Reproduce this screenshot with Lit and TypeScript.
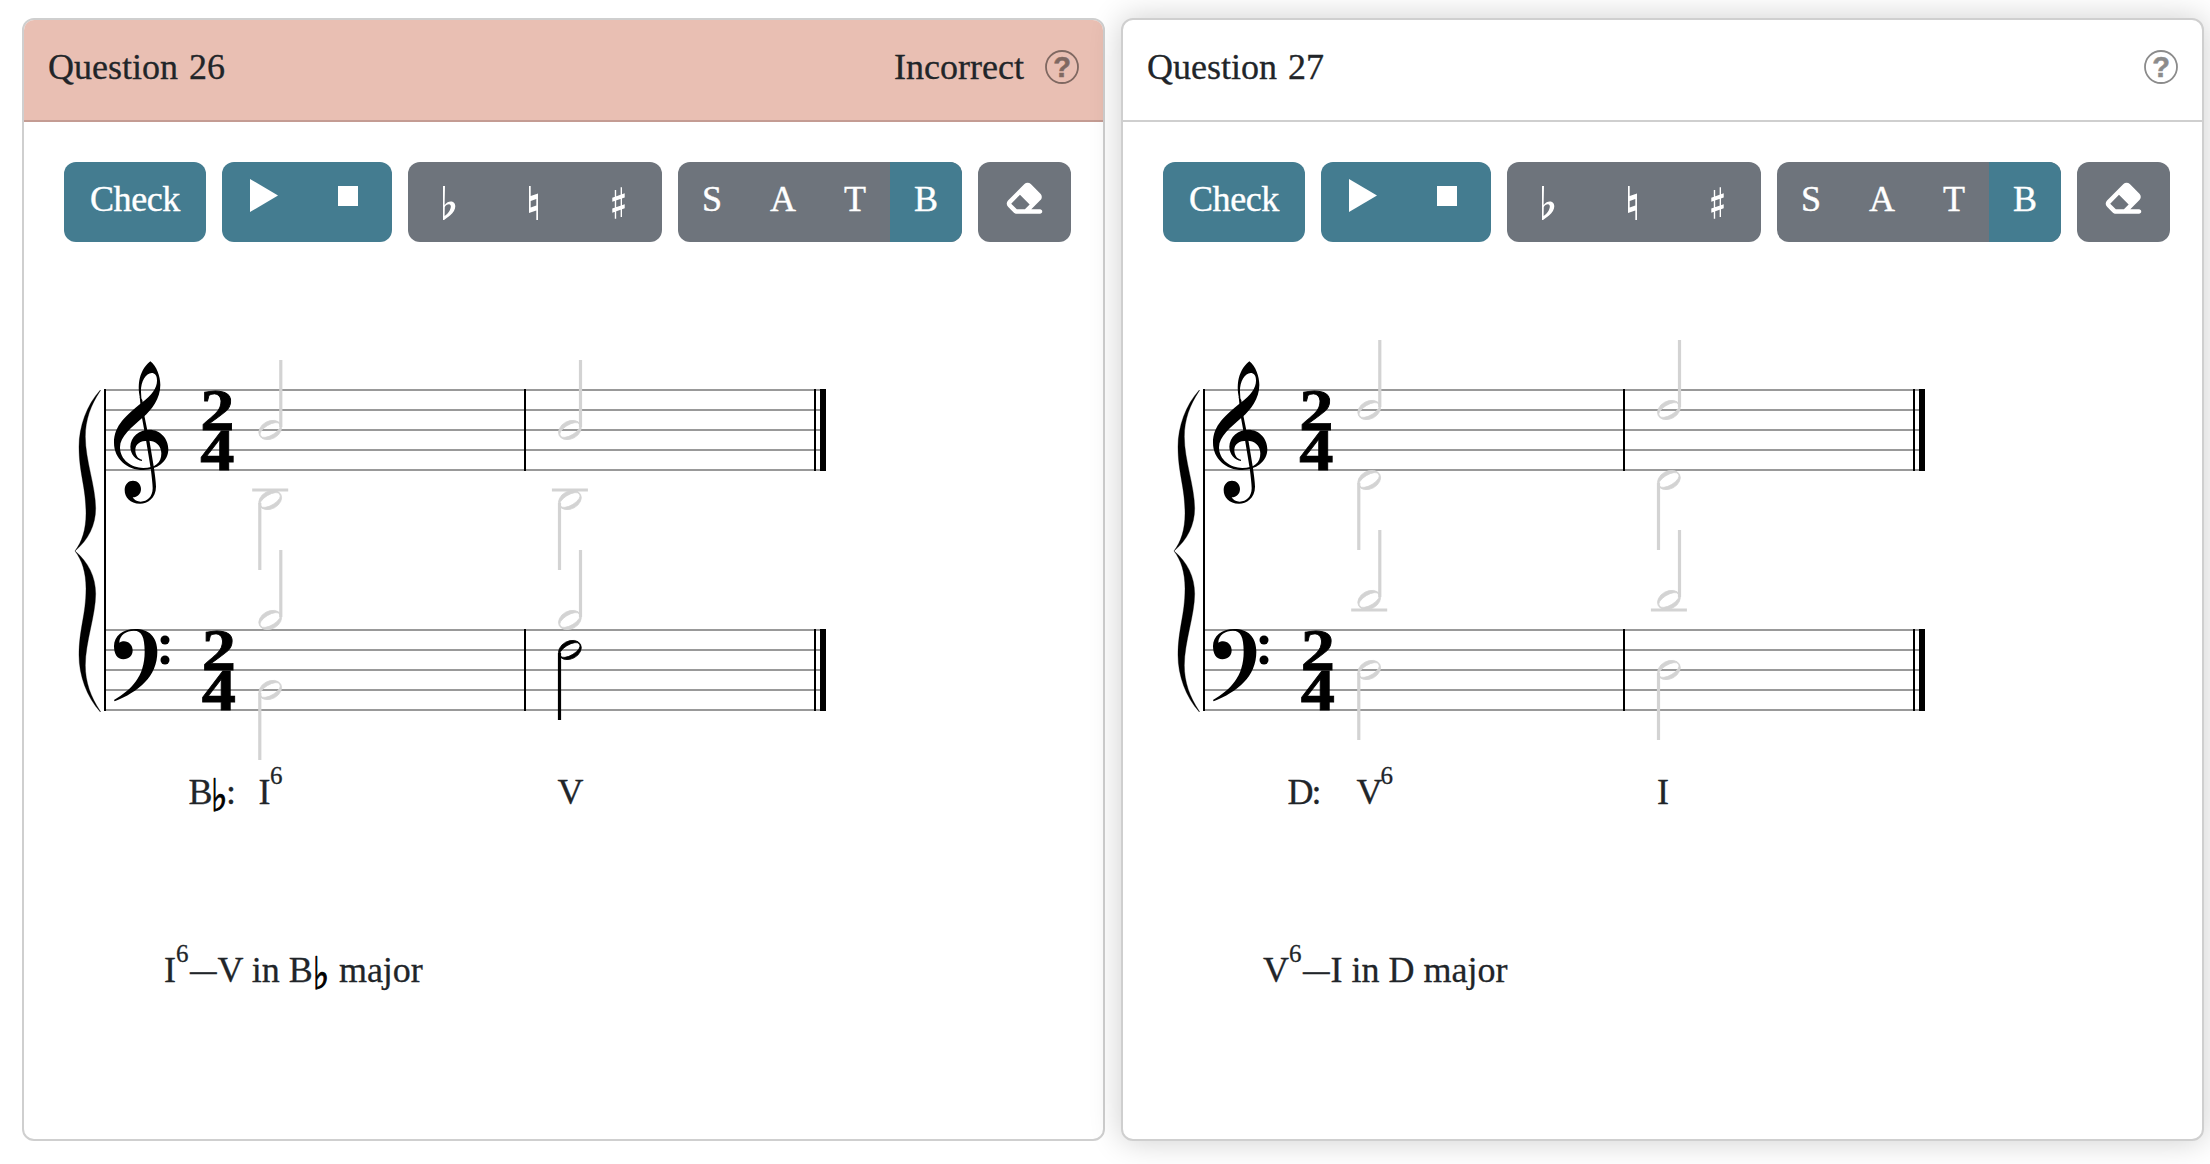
import { LitElement, html, svg, css } from 'lit';
import { classMap } from 'lit/directives/class-map.js';

type Note = {
  x: number
  y: number
  stem: 'up' | 'down'
  ledger?: number
  active?: boolean
}

type Label = {
  x: number
  text: string
  flat?: boolean
  figure?: string
}

type Exercise = {
  number: number
  status?: string
  focused?: boolean
  notes: Note[]
  labels: Label[]
  caption: unknown
}

const BEAT_ONE = 270.2;
const BEAT_TWO = 569.9;

const voices = (x: number, [s, a, t, b]: number[]): Note[] => [
  { x, y: s, stem: 'up' },
  { x, y: a, stem: 'down', ledger: a === 500 ? 490 : undefined },
  { x, y: t, stem: 'up', ledger: t === 600 ? 610 : undefined },
  { x, y: b, stem: 'down' },
];

const flat = html`<span class="flat">♭</span>`;

const exercises: Exercise[] = [
  {
    number: 26,
    status: 'Incorrect',
    notes: [
      ...voices(BEAT_ONE, [430, 500, 620, 690]),
      ...voices(BEAT_TWO, [430, 500, 620, 650]).map((note, i) => ({ ...note, active: i === 3 })),
    ],
    labels: [
      { x: 188.5, text: 'B', flat: true },
      { x: 258.5, text: 'I', figure: '6' },
      { x: 557.5, text: 'V' },
    ],
    caption: html`I<sup>6</sup><span class="dash">—</span>V in B${flat} major`,
  },
  {
    number: 27,
    focused: true,
    notes: [
      ...voices(BEAT_ONE, [410, 480, 600, 670]),
      ...voices(BEAT_TWO, [410, 480, 600, 670]),
    ],
    labels: [
      { x: 188.5, text: 'D:' },
      { x: 257.5, text: 'V', figure: '6' },
      { x: 558, text: 'I' },
    ],
    caption: html`V<sup>6</sup><span class="dash">—</span>I in D major`,
  },
];

export class MusicStaff extends LitElement {
  static styles = css`
    :host {
      display: block;
    }

    svg {
      display: block;
      overflow: visible;
    }

    .line {
      stroke: #999;
      stroke-width: 2;
    }

    .bar {
      stroke: #000;
      stroke-width: 2;
    }

    .note {
      fill: lightgrey;
      stroke: lightgrey;
      stroke-width: 0.7;
    }

    .note.active {
      fill: #000;
      stroke: #000;
    }

    .note line {
      stroke-width: 3.2;
    }

    .time {
      font: bold 60px "Liberation Serif", serif;
      text-anchor: middle;
      stroke: #000;
      stroke-width: 0.8;
    }

    .label {
      font: 36px "Liberation Serif", serif;
      fill: #212529;
      stroke: #212529;
      stroke-width: 0.3;
      letter-spacing: -2px;
    }

    .figure {
      font-size: 25px;
    }

    .flat {
      font: 38px "DejaVu Sans", sans-serif;
      fill: #000;
      stroke: #000;
      stroke-width: 0.9;
    }
  `;

  declare notes: Note[]
  declare labels: Label[]

  static properties = {
    notes: { type: Array },
    labels: { type: Array },
  };

  constructor() {
    super();
    this.notes = [];
    this.labels = [];
  }

  renderStaff(top: number) {
    return svg`
      ${[0, 20, 40, 60, 80].map(dy => svg`
        <line class="line" x1="105" x2="821" y1=${top + dy} y2=${top + dy} />
      `)}
      <line class="bar" x1="525" x2="525" y1=${top - 1} y2=${top + 81} />
      <line class="bar" x1="815" x2="815" y1=${top - 1} y2=${top + 81} />
      <rect x="820" y=${top - 1} width="6" height="82" />
    `;
  }

  renderTime(x: number, top: number) {
    return svg`
      <g class="time" transform="translate(${x} ${top}) scale(1.14 1)">
        <text y="40">2</text>
        <text y="80">4</text>
      </g>
    `;
  }

  renderNote({ x, y, stem, ledger, active }: Note) {
    const up = stem === 'up';
    const stemX = up ? x + 10.6 : x - 10.4;
    return svg`
      <g class="note ${active ? 'active' : ''}">
        <path fill-rule="evenodd" transform="translate(${x} ${y}) rotate(-28)"
          d="M-12 0A12 8.9 0 1 1 12 0A12 8.9 0 1 1 -12 0ZM-11 .7A11.1 4.7 -3 1 0 11 -.7A11.1 4.7 -3 1 0 -11 .7Z" />
        <line x1=${stemX} x2=${stemX} y1=${up ? y - 3 : y + 3} y2=${up ? y - 70 : y + 70} />
        ${ledger ? svg`<line x1=${x - 18} x2=${x + 18} y1=${ledger} y2=${ledger} />` : ''}
      </g>
    `;
  }

  renderLabel({ x, text, flat, figure }: Label) {
    return svg`
      <text class="label" x=${x} y="804">${text}</text>
      ${flat ? svg`
        <text class="flat" transform="translate(${x + 22.5} 811) scale(.92 1.18)">♭</text>
        <text class="label" x=${x + 37.5} y="804">:</text>
      ` : ''}
      ${figure ? svg`
        <text class="label figure" x=${x + (text === 'V' ? 24 : 11.5)} y="784">${figure}</text>
      ` : ''}
    `;
  }

  render() {
    // one half of the grand staff brace, mirrored for the other
    const brace = 'M121 150C80 195 57 260 57 320C57 400 78 440 78 520C78 570 66 605 45 633C85 600 107 555 107 505C107 440 76 360 76 290C76 240 92 195 121 152Z';

    return html`
      <svg width="800" height="490" viewBox="64 330 800 490">
        ${this.renderStaff(390)}
        ${this.renderStaff(630)}
        <line class="bar" x1="105" x2="105" y1="389" y2="711" />
        <g transform="translate(60 340) scale(.33333)">
          <path d=${brace} stroke="#000" />
          <path d=${brace} stroke="#000" transform="translate(0 1266) scale(1 -1)" />
          <path d="M245 190C230 150 232 95 271 64C290 78 301 110 301 135C301 175 275 210 249 232C215 262 180 290 180 322C180 360 215 384 250 384C285 384 304 370 304 340C304 315 285 302 265 302C240 302 226 312 226 330C226 345 234 357 246 359L246 363C228 360 211 343 211 320C211 290 238 269 268 269C300 269 325 295 325 328C325 365 290 390 250 390C200 390 162 355 162 308C162 255 200 225 245 188C275 165 291 145 291 122C291 105 284 99 275 99C258 99 242 125 243 155Z" />
          <path d="M239 170L247 180L254 232L268 300L282 385C286 415 288 430 288 440C288 475 262 491 240 491C210 491 194 472 194 450C194 432 206 422 219 422C232 422 243 432 243 447C243 462 232 472 218 472C222 480 232 485 242 485C262 485 278 470 278 445C278 435 276 415 272 385L258 300L245 228Z" />
        </g>
        <g transform="translate(60 520) scale(.33333)">
          <path d="M162 378C162 348 188 327 226 327C266 327 292 350 292 395C292 470 235 515 164 544L162 540C215 508 254 470 254 395C254 350 245 332 222 332C200 332 178 345 178 368C183 365 188 364 192 364C207 364 218 376 218 391C218 407 207 418 190 418C172 418 162 402 162 378Z" />
          <circle cx="315" cy="360" r="13.5" />
          <circle cx="315" cy="420" r="13.5" />
        </g>
        ${this.renderTime(217.3, 390)}
        ${this.renderTime(218.8, 630)}
        ${this.notes.map(note => this.renderNote(note))}
        ${this.labels.map(label => this.renderLabel(label))}
      </svg>
    `;
  }
}

customElements.define('music-staff', MusicStaff);

export class QuestionCard extends LitElement {
  static styles = css`

    * {
      box-sizing: border-box;
    }

    :host {
      display: block;
      -webkit-text-stroke: 0.3px currentColor;
    }

    .card {
      height: 100%;
      border: 2px solid #cfcfcf;
      border-radius: 12px;
      background: #fff;
      overflow: hidden;
    }

    .card.focused {
      box-shadow: 0 0 32px rgba(0, 0, 0, 0.2);
    }

    .header {
      display: flex;
      align-items: center;
      gap: 21px;
      height: 102px;
      padding: 0 24px 6px;
      border-bottom: 2px solid #cfcfcf;
    }

    .header.incorrect {
      background: #e9bfb3;
      border-bottom-color: #c49c93;
    }

    .title {
      flex: 1;
      word-spacing: 2px;
    }

    .help {
      display: block;
      opacity: 0.45;
    }

    .mark {
      font: bold 29px "Liberation Sans", sans-serif;
      text-anchor: middle;
      stroke: #000;
      stroke-width: 0.6;
    }

    .toolbar {
      display: flex;
      gap: 16px;
      padding: 40px 0 0 40px;
    }

    .group {
      display: flex;
      height: 80px;
      border-radius: 12px;
      overflow: hidden;
      background: #6e747c;
      color: #fff;
    }

    .group.primary, .button.active {
      background: #447c90;
    }

    .button {
      display: flex;
      align-items: center;
      justify-content: center;
      padding: 0 24px 6px;
      border: none;
      background: transparent;
      color: inherit;
      font: inherit;
      -webkit-text-stroke: 0.4px #fff;
    }

    .check { width: 142px; letter-spacing: -0.4px; }
    .play { width: 85px; padding: 0 1px 13px 0; }
    .stop { width: 85px; padding: 0 3px 12px 0; }
    .accidental { width: 84.67px; padding: 1px 2px 0 0; }
    .erase { width: 93px; padding-bottom: 9px; }

    .icon {
      display: block;
      flex: none;
      fill: currentColor;
    }

    .staff {
      margin: 88px 0 0 40px;
    }

    .caption {
      margin: 122px 0 0 140px;
      line-height: 56px;
      white-space: nowrap;
    }

    .caption sup {
      font-size: 25px;
      line-height: 0;
      vertical-align: 20px;
    }

    .dash {
      display: inline-block;
      width: 29px;
      transform: scaleX(0.74);
      transform-origin: 4px 0;
    }

    .flat {
      display: inline-block;
      width: 17px;
      color: #000;
      font: 38px/0 "DejaVu Sans", sans-serif;
      vertical-align: -4px;
      text-indent: -1px;
      transform: translateY(1px) scale(0.92, 1.18);
      -webkit-text-stroke: 0.9px #000;
    }
  `;

  declare exercise: Exercise

  static properties = {
    exercise: { type: Object },
  };

  renderToolbar() {
    return html`
      <div class="toolbar">
        <div class="group primary"><button class="button check">Check</button></div>
        <div class="group primary">
          <button class="button play">
            <svg class="icon" width="28" height="33"><path d="M0 0L28 16.5L0 33Z" /></svg>
          </button>
          <button class="button stop">
            <svg class="icon" width="20" height="20"><rect width="20" height="20" /></svg>
          </button>
        </div>
        <div class="group">
          <button class="button accidental">
            <svg class="icon" width="14" height="34" viewBox="0 0 14 34">
              <path fill-rule="evenodd" d="M1 0H3L2.6 19C5 16 8 15 10.5 15.8C15 17.5 14 25 8 29.5L2 34H1ZM2.8 21L2.6 30C8 27 11 18.5 7 18.3C5 18.3 3.8 19.3 2.8 21Z" />
            </svg>
          </button>
          <button class="button accidental">
            <svg class="icon" width="9" height="34" viewBox="0 0 9 34">
              <path fill-rule="evenodd" d="M0 0H1.7V10L9 7.5V34H7.3V24.5L0 27ZM1.7 15V21.5L7.3 19.5V13Z" />
            </svg>
          </button>
          <button class="button accidental">
            <svg class="icon" width="13" height="34" viewBox="0 0 14 34">
              <path d="M3 3H4.5V34H3ZM9.3 0H10.8V32H9.3ZM.3 11.3L13.7 6.6V11L.3 15.7ZM.3 23L13.7 18.3V22.7L.3 27.4Z" />
            </svg>
          </button>
        </div>
        <div class="group">
          ${['S', 'A', 'T', 'B'].map(voice => html`
            <button class="button ${voice === 'B' ? 'active' : ''}">${voice}</button>
          `)}
        </div>
        <div class="group">
          <button class="button erase">
            <svg class="icon" width="40.5" height="36" viewBox="0 0 576 512">
              <path d="M290.7 57.4L57.4 290.7c-25 25-25 65.5 0 90.5l80 80c12 12 28.3 18.7 45.3 18.7H512c17.7 0 32-14.3 32-32s-14.3-32-32-32H387.9L518.6 285.3c25-25 25-65.5 0-90.5L381.3 57.4c-25-25-65.5-25-90.5 0zM297.4 416H182.6l-80-80L227.3 211.3 364.7 348.7 297.4 416z" />
            </svg>
          </button>
        </div>
      </div>
    `;
  }

  render() {
    const { number, status, focused, notes, labels, caption } = this.exercise;

    return html`
      <div class="card ${classMap({ focused: !!focused })}">
        <div class="header ${classMap({ incorrect: status === 'Incorrect' })}">
          <span class="title">Question ${number}</span>
          ${status ? html`<span>${status}</span>` : ''}
          <svg class="help" width="34" height="34" viewBox="0 0 34 34">
            <circle cx="17" cy="17" r="16" fill="none" stroke="#000" stroke-width="1.8" />
            <text class="mark" x="17" y="27">?</text>
          </svg>
        </div>
        ${this.renderToolbar()}
        <music-staff class="staff" .notes=${notes} .labels=${labels}></music-staff>
        <div class="caption">${caption}</div>
      </div>
    `;
  }
}

customElements.define('question-card', QuestionCard);

export class AppRoot extends LitElement {
  static styles = css`
    :host {
      display: grid;
      grid-template-columns: 1083px 1083px;
      gap: 16px;
      box-sizing: border-box;
      height: 1164px;
      padding: 18px 0 23px 22px;
      overflow: hidden;
      background: #fff;
      color: #212529;
      font: 36px "Liberation Serif", serif;
    }
  `;

  render() {
    return exercises.map(exercise => html`
      <question-card .exercise=${exercise}></question-card>
    `);
  }
}

customElements.define('app-root', AppRoot);
